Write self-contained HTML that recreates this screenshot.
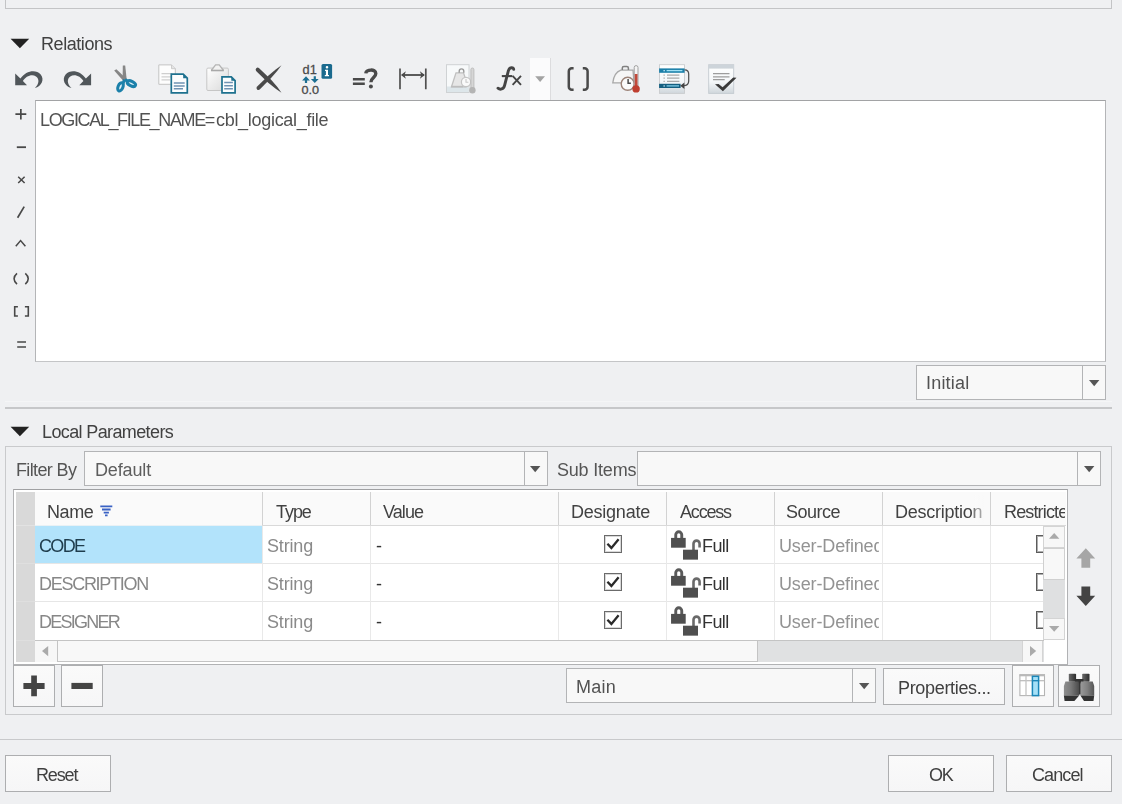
<!DOCTYPE html>
<html>
<head>
<meta charset="utf-8">
<title>Relations</title>
<style>
html,body{margin:0;padding:0;}
body{width:1122px;height:804px;position:relative;overflow:hidden;background:#eff0f2;
 font-family:"Liberation Sans",sans-serif;font-size:18px;color:#3a3a3a;}
.a{position:absolute;box-sizing:border-box;}
.t{position:absolute;white-space:pre;line-height:20px;height:20px;will-change:transform;}
.box{position:absolute;box-sizing:border-box;border:1px solid #b3b4b6;background:#f8f8f8;}
.btn{position:absolute;box-sizing:border-box;border:1px solid #adaeb0;background:linear-gradient(#fafafa,#f6f6f7);}
.vl{position:absolute;width:1px;background:#dcdcdc;}
.hl{position:absolute;height:1px;background:#e6e6e6;}
svg{position:absolute;overflow:visible;}
</style>
</head>
<body>

<!-- top cut-off panel -->
<div class="a" style="left:5px;top:-2px;width:1107px;height:11px;border:1px solid #c3c4c6;"></div>

<!-- Relations header -->
<svg style="left:0;top:0" width="60" height="60"><path d="M10.6 38.8H29.2L19.9 48.3Z" fill="#222"/></svg>
<span class="t" id="tRel" style="left:41.1px;top:34px;color:#414141;letter-spacing:-0.44px">Relations</span>

<!-- TOOLBAR ICONS -->
<!-- all toolbar icons drawn in page coordinates inside one svg -->
<svg style="left:0;top:55px" width="760" height="50" viewBox="0 55 760 50">
<defs>
 <linearGradient id="gclip" x1="0" y1="0" x2="1" y2="1"><stop offset="0" stop-color="#ffffff"/><stop offset="1" stop-color="#d9d9d9"/></linearGradient>
 <linearGradient id="gpage" x1="0" y1="0" x2="0" y2="1"><stop offset="0" stop-color="#ffffff"/><stop offset="0.6" stop-color="#f4f7f9"/><stop offset="1" stop-color="#cfd6db"/></linearGradient>
</defs>
<!-- undo -->
<path d="M15.2 73.400V85.200H27L22.900 81.100C25.600 76.200 31.800 73.600 36 76.400C39.600 79 39.200 83.900 34.800 87.900C41.600 86.300 44.800 79.500 40.700 74.400C35.800 68.900 25.800 70.500 20.400 78.600Z" fill="#50565a"/>
<path d="M91.100 73.400V85.200H79.300L83.400 81.100C80.700 76.200 74.500 73.600 70.300 76.400C66.700 79 67.100 83.900 71.500 87.900C64.700 86.300 61.500 79.500 65.600 74.400C70.500 68.900 80.500 70.500 85.900 78.600Z" fill="#50565a"/>
<!-- scissors -->
<path d="M114.200 70.500L116.400 69.200L127.200 79.400L124.300 82Z" fill="#868686"/>
<path d="M122.800 65.600H125.200L126.800 80.500L122.600 80.500Z" fill="#868686"/>
<path d="M124.600 79.500L122.800 84M125 79.500L128.500 82" stroke="#1b80aa" stroke-width="3"/>
<ellipse cx="120.500" cy="86.800" rx="2.400" ry="4.400" transform="rotate(24 120.500 86.800)" fill="#dff0f7" stroke="#1b80aa" stroke-width="3"/>
<ellipse cx="131.400" cy="83.600" rx="4.500" ry="2.300" transform="rotate(27 131.400 83.600)" fill="#dff0f7" stroke="#1b80aa" stroke-width="3"/>
<!-- copy -->
<path d="M158.800 64.900H171.500L175.300 68.700V84.300H158.800Z" fill="#fdfdfd" stroke="#c4c4c4" stroke-width="1"/>
<path d="M171.500 64.900V68.700H175.300" fill="#e4e4e4" stroke="#c4c4c4" stroke-width="0.800"/>
<path d="M161.500 73.600H172M161.500 76.800H172M161.500 79.800H170" stroke="#cfcfcf" stroke-width="1.300"/>
<path d="M171.300 74.100H183.200L187.300 78.200V92.900H171.300Z" fill="#fbfdfe" stroke="#1e718f" stroke-width="1.700"/>
<path d="M183.200 74.100V78.200H187.300Z" fill="#1e718f"/>
<path d="M173.800 83H184.700M173.800 85.900H184.700M173.800 88.800H183" stroke="#6f93b3" stroke-width="1.500"/>
<!-- paste -->
<rect x="206.800" y="68.100" width="21.600" height="22.400" rx="1.200" fill="url(#gclip)" stroke="#c6c6c6" stroke-width="1"/>
<path d="M211.200 70.500L215.600 64.800H219.200L223.600 70.500" fill="#f2f2f2" stroke="#b4b4b4" stroke-width="1.300"/>
<path d="M211 70.500H223.800" stroke="#a8a8a8" stroke-width="1.600"/>
<path d="M222 76.900H231.300L235.100 80.700V92.900H222Z" fill="#fbfdfe" stroke="#1e718f" stroke-width="1.700"/>
<path d="M231.300 76.900V80.700H235.100Z" fill="#1e718f"/>
<path d="M224.200 82.600H232.900M224.200 85.700H232.900M224.200 88.700H232.900" stroke="#6f93b3" stroke-width="1.500"/>
<!-- X -->
<path d="M258.900 68.100L270.900 79.500L277.400 87.100L281.500 92.800L275.700 88.800L267.900 82.600L256.100 70.900A2 2 0 0 1 258.900 68.100Z" fill="#4a4a4a"/>
<path d="M256.900 86.800L268.500 75.500L276 69.200L281.500 65.200L277.400 70.700L271.100 78.100L259.700 89.600A2 2 0 0 1 256.900 86.800Z" fill="#4a4a4a"/>
<!-- d1 / 0.0 -->
<text x="302.600" y="73.700" font-family="Liberation Sans, sans-serif" font-size="13.500" fill="#4a4a4a" stroke="#4a4a4a" stroke-width="0.3" textLength="14.200" lengthAdjust="spacingAndGlyphs">d1</text>
<path d="M306 76.300L309.900 80.400H307.100V83H304.900V80.400H302.100Z" fill="#1d6f92"/>
<path d="M314.800 83L318.700 78.900H315.900V76.300H313.700V78.900H310.900Z" fill="#1d6f92"/>
<text x="301.500" y="93.700" font-family="Liberation Sans, sans-serif" font-size="11.800" fill="#4a4a4a" stroke="#4a4a4a" stroke-width="0.3" textLength="17.600" lengthAdjust="spacingAndGlyphs">0.0</text>
<rect x="321.500" y="64" width="10.600" height="14.800" rx="1.500" fill="#1a6a8e"/>
<path d="M325.700 67.200A1.300 1.300 0 1 0 328.300 67.200A1.300 1.300 0 1 0 325.700 67.200ZM325 69.800H328V75H329V76.300H324.800V75H325.900V71.100H325Z" fill="#fff"/>
<!-- =? -->
<path d="M352.900 78H364.800V80.600H352.900ZM352.900 82.500H364.800V85H352.900Z" fill="#4a4a4a"/>
<path d="M365.800 73.300C366 69.600 375.600 68.300 375.800 73.600C375.900 77.300 371 77.600 370.900 82.200" fill="none" stroke="#4a4a4a" stroke-width="3.400"/>
<circle cx="370.900" cy="86.400" r="2" fill="#4a4a4a"/>
<!-- |<->| -->
<path d="M400 68.400V89.300M425.800 68.400V89.300" stroke="#505050" stroke-width="1.700"/>
<path d="M402 75H424" stroke="#4a4a4a" stroke-width="1.800"/>
<path d="M400.900 75L405.900 71.300L404.500 75L405.900 78.700Z" fill="#4a4a4a"/>
<path d="M424.900 75L419.900 71.300L421.300 75L419.900 78.700Z" fill="#4a4a4a"/>
<!-- unit-sensitive (disabled) -->
<rect x="446.500" y="64.700" width="22.500" height="27.800" fill="#f7f9fa" stroke="#cfd2d4" stroke-width="1"/>
<rect x="447" y="86.500" width="21.500" height="5.500" fill="#dde6ea"/>
<path d="M451.500 86.800L456 72.800H463.500L466 80V86.800Z" fill="#e6e6e6" stroke="#c0c0c0" stroke-width="1.300"/>
<path d="M459.200 72.800V71.200A2.300 2.300 0 0 1 463.800 71.200V72.800" fill="none" stroke="#9a9a9a" stroke-width="1.400"/>
<path d="M451 86.600H463" stroke="#bdbdbd" stroke-width="1.600"/>
<circle cx="466" cy="82" r="4.600" fill="#fafafa" stroke="#c4c4c4" stroke-width="1.200"/>
<path d="M466 78.900V82.300H468.400" fill="none" stroke="#c9c9c9" stroke-width="1.100"/>
<path d="M470.900 69.500A1.500 1.500 0 0 1 473.900 69.500V88H470.900Z" fill="#d6d6d6" stroke="#b9b9b9" stroke-width="0.900"/>
<circle cx="472.400" cy="90.300" r="3.200" fill="#b4b4b4"/>
<!-- fx -->
<path d="M513.700 69.400C513.400 67.300 509.600 66.600 508.400 70.600L504.600 85.400C503.600 89.500 500 89.900 498 88.200" fill="none" stroke="#444" stroke-width="2.900" stroke-linecap="round"/>
<path d="M501.800 76.100H512.300" stroke="#444" stroke-width="2.100"/>
<path d="M512.600 75.900L521 84.900M521 75.900L512.600 84.900" stroke="#444" stroke-width="1.900"/>
<!-- dropdown zone -->
<rect x="530" y="58" width="21" height="42" fill="#fbfbfc"/>
<path d="M550.500 58V100" stroke="#dcdcde" stroke-width="1"/>
<path d="M535.200 76.200H545L540.100 82Z" fill="#a3a3a3"/>
<!-- [ ] -->
<path d="M573.600 68.300H571.800A3 3 0 0 0 568.800 71.300V86.700A3 3 0 0 0 571.800 89.700H573.600" fill="none" stroke="#4a4a4a" stroke-width="2.500"/>
<path d="M582.800 68.300H584.600A3 3 0 0 1 587.600 71.300V86.700A3 3 0 0 1 584.600 89.700H582.800" fill="none" stroke="#4a4a4a" stroke-width="2.500"/>
<!-- weight + clock + thermometer -->
<path d="M612.800 82.800C613.500 76.500 616 72 620.800 70.200H633L634 82.800Z" fill="#f6f6f6" stroke="#a8a8a8" stroke-width="1.300"/>
<path d="M622.300 70V68A1.600 1.600 0 0 1 623.900 66.400H626.800A1.600 1.600 0 0 1 628.400 68V70" fill="none" stroke="#808080" stroke-width="1.500"/>
<circle cx="627.700" cy="83.800" r="6.500" fill="#fbfbfb" stroke="#9c8378" stroke-width="1.400"/>
<path d="M628.100 79V83.300H630.900" fill="none" stroke="#4a4a4a" stroke-width="1.500"/>
<path d="M634.200 67.500A1.900 1.900 0 0 1 638 67.500V86H634.200Z" fill="#f4f4f4" stroke="#a0a0a0" stroke-width="1"/>
<path d="M634.700 74H637.500V86H634.700Z" fill="#c24a3b"/>
<circle cx="636.100" cy="88.900" r="3.700" fill="#bf3f30"/>
<!-- list -->
<rect x="659.500" y="64.700" width="25" height="28.700" fill="url(#gpage)" stroke="#c9ccce" stroke-width="0.900"/>
<rect x="659.100" y="68.400" width="25.500" height="4.400" fill="#1b7fa8"/>
<path d="M666.600 70.600H682.400" stroke="#9fe0f4" stroke-width="1.300"/>
<rect x="663.500" y="70" width="1.300" height="1.300" fill="#cfeefa"/>
<path d="M667 75.200H679.400M667 78.200H679.400M667 81.300H679.400" stroke="#a9a9a9" stroke-width="1.300"/>
<path d="M663.500 75.200H664.800M663.500 78.200H664.800M663.500 81.300H664.800" stroke="#a9a9a9" stroke-width="1.300"/>
<rect x="659.100" y="83.800" width="21.500" height="4.200" fill="#155f80"/>
<path d="M666.600 85.900H679" stroke="#7fcbe6" stroke-width="1.300"/>
<rect x="663.500" y="85.300" width="1.300" height="1.300" fill="#cfeefa"/>
<path d="M684.600 69.800C687.600 69.800 688.700 71.600 688.700 74V81C688.700 84.300 686.800 85.700 683.500 85.700" fill="none" stroke="#505050" stroke-width="1.250"/>
<path d="M680.200 85.700L684.400 82.400V89Z" fill="#444"/>
<!-- check doc -->
<rect x="708.700" y="64.700" width="25" height="28.700" fill="url(#gpage)" stroke="#c3cad0" stroke-width="0.900"/>
<rect x="708.700" y="64.700" width="25" height="3.900" fill="#cdd4da"/>
<path d="M713 73.600H729.500M713 76.800H729.500M713 79.700H724.700" stroke="#9d9d9d" stroke-width="1.300"/>
<path d="M715 84.300L718.600 84.100L722.600 87.200L733.200 77.400L736.500 77.700L722.900 91.200Z" fill="#3a3a3a"/>
</svg>


<!-- operator column -->
<svg style="left:10px;top:105px" width="22" height="250" viewBox="10 105 22 250" fill="none" stroke="#484848" stroke-width="1.600">
<path d="M15.400 114.200H26.300M20.850 108.900V119.600" stroke-width="1.700"/>
<path d="M16.800 147.200H26" stroke-width="1.800"/>
<path d="M18.200 176.800L24.600 183M24.600 176.800L18.200 183" stroke-width="1.500"/>
<path d="M24.200 206.600L17.600 217.700" stroke-width="1.700"/>
<path d="M15.800 246.200L20.600 240.600L25.400 246.200" stroke-width="1.500"/>
<path d="M17 273.300C13.100 276.600 13.100 280.800 17 284.100M25.300 273.300C29.200 276.600 29.200 280.800 25.300 284.100" stroke-width="1.600"/>
<path d="M17.900 306.700H14.700V316H17.900M24.900 306.700H28.300V316H24.900" stroke-width="1.600"/>
<path d="M17.200 342H26M17.200 347H26" stroke-width="1.700"/>
</svg>


<!-- relations text area -->
<div class="a" style="left:35px;top:100px;width:1071px;height:262px;background:#fff;border:1px solid #b4b5b7;border-top-color:#a2a3a5;border-bottom-color:#c4c5c7;"></div>
<span class="t" id="tLog" style="left:40px;top:110px;color:#525252;letter-spacing:-1.37px">LOGICAL_FILE_NAME=</span>
<span class="t" id="tLog2" style="left:216px;top:110px;color:#525252;letter-spacing:-0.3px">cbl_logical_file</span>

<!-- Initial dropdown -->
<div class="box" style="left:916px;top:365px;width:190px;height:35px;"></div>
<div class="a" style="left:1082px;top:366px;width:1px;height:33px;background:#b3b4b6;"></div>
<svg style="left:1089px;top:380px" width="11" height="7"><path d="M0 0H10.4L5.2 6.2Z" fill="#555"/></svg>
<span class="t" id="tIni" style="left:926.1px;top:373px;color:#525252;letter-spacing:0.19px">Initial</span>

<!-- separator -->
<div class="a" style="left:5px;top:401px;width:1107px;height:1px;background:#f4f5f6;"></div>
<div class="a" style="left:5px;top:407px;width:1107px;height:2px;background:#c6c7c9;"></div>

<!-- Local Parameters header -->
<svg style="left:0;top:400px" width="60" height="60"><path d="M10.6 26.8H29.2L19.9 36.3Z" fill="#222"/></svg>
<span class="t" id="tLoc" style="left:42.0px;top:422px;color:#414141;letter-spacing:-0.62px">Local Parameters</span>

<!-- Local parameters panel -->
<div class="a" style="left:5px;top:446px;width:1107px;height:269px;border:1px solid #c9cacc;"></div>

<!-- filter row -->
<span class="t" id="tFil" style="left:16.2px;top:460px;color:#555555;letter-spacing:-0.64px">Filter By</span>
<div class="box" style="left:84px;top:451px;width:464px;height:35px;"></div>
<div class="a" style="left:524px;top:452px;width:1px;height:33px;background:#b3b4b6;"></div>
<svg style="left:530px;top:466px" width="11" height="7"><path d="M0 0H10.4L5.2 6.2Z" fill="#555"/></svg>
<span class="t" id="tDef" style="left:95.0px;top:460px;color:#5e5e5e;letter-spacing:-0.14px">Default</span>
<div class="box" style="left:637px;top:451px;width:464px;height:35px;"></div>
<div class="a" style="left:1077px;top:452px;width:1px;height:33px;background:#b3b4b6;"></div>
<svg style="left:1084px;top:466px" width="11" height="7"><path d="M0 0H10.4L5.2 6.2Z" fill="#555"/></svg>

<span class="t" id="tSub" style="left:556.5px;top:460px;color:#555555;letter-spacing:-0.2px">Sub Items</span>
<!-- TABLE -->
<div class="a" style="left:13px;top:489px;width:1055px;height:176px;background:#fff;border:1px solid #b1b2b4;border-top-color:#a0a1a3;"></div>
<!-- gray row-header column -->
<div class="a" style="left:16px;top:492px;width:19px;height:170px;background:#d9d9d9;"></div>
<div class="a" style="left:16px;top:525px;width:19px;height:1px;background:#e2e2e2;"></div>
<div class="a" style="left:16px;top:563px;width:19px;height:1px;background:#dfdfdf;"></div>
<div class="a" style="left:16px;top:601px;width:19px;height:1px;background:#dfdfdf;"></div>
<div class="a" style="left:16px;top:640px;width:19px;height:1px;background:#dfdfdf;"></div>
<!-- header -->
<div class="a" style="left:35px;top:492px;width:1031px;height:33px;background:#fafafa;"></div>
<div class="a" style="left:35px;top:525px;width:1031px;height:1px;background:#d9d9d9;"></div>
<div class="a" style="left:35px;top:525px;width:227px;height:1px;background:#e9f1f5;"></div>
<!-- selected cell -->
<div class="a" style="left:35px;top:526px;width:227px;height:37px;background:#b2e3fb;"></div>
<!-- row lines -->
<div class="hl" style="left:35px;top:563px;width:1008px;"></div>
<div class="hl" style="left:35px;top:601px;width:1008px;"></div>
<!-- column lines header -->
<div class="vl" style="left:262px;top:492px;height:33px;background:#d2d2d2;"></div>
<div class="vl" style="left:370px;top:492px;height:33px;background:#d2d2d2;"></div>
<div class="vl" style="left:558px;top:492px;height:33px;background:#d2d2d2;"></div>
<div class="vl" style="left:666px;top:492px;height:33px;background:#d2d2d2;"></div>
<div class="vl" style="left:774px;top:492px;height:33px;background:#d2d2d2;"></div>
<div class="vl" style="left:882px;top:492px;height:33px;background:#d2d2d2;"></div>
<div class="vl" style="left:990px;top:492px;height:33px;background:#d2d2d2;"></div>
<!-- column lines body -->
<div class="vl" style="left:262px;top:526px;height:114px;background:#e9e9e9;"></div>
<div class="vl" style="left:370px;top:526px;height:114px;background:#e9e9e9;"></div>
<div class="vl" style="left:558px;top:526px;height:114px;background:#e9e9e9;"></div>
<div class="vl" style="left:666px;top:526px;height:114px;background:#e9e9e9;"></div>
<div class="vl" style="left:774px;top:526px;height:114px;background:#e9e9e9;"></div>
<div class="vl" style="left:882px;top:526px;height:114px;background:#e9e9e9;"></div>
<div class="vl" style="left:990px;top:526px;height:114px;background:#e9e9e9;"></div>
<!-- header labels -->
<span class="t" id="hName" style="left:47.0px;top:502px;color:#424242;letter-spacing:-0.39px">Name</span>
<svg style="left:100px;top:505px" width="13" height="12"><path d="M0.3 0.4H12.3V2.2H0.3ZM2 3.6H10.6V5.4H2ZM3.7 6.8H8.9V8.6H3.7ZM5 9.6H7.6V11.2H5Z" fill="#3a62c4"/></svg>
<span class="t" id="hType" style="left:275.9px;top:502px;color:#424242;letter-spacing:-1.06px">Type</span>
<span class="t" id="hVal" style="left:383.4px;top:502px;color:#424242;letter-spacing:-0.93px">Value</span>
<span class="t" id="hDes" style="left:571.0px;top:502px;color:#424242;letter-spacing:-0.23px">Designate</span>
<span class="t" id="hAcc" style="left:679.9px;top:502px;color:#424242;letter-spacing:-1.19px">Access</span>
<span class="t" id="hSrc" style="left:786.1px;top:502px;color:#424242;letter-spacing:-0.51px">Source</span>
<div class="a" style="left:895px;top:495px;width:89px;height:28px;overflow:hidden;"><span class="t" id="hDsc" style="left:0;top:7px;color:#424242;letter-spacing:-0.25px">Description</span><div class="a" style="left:79px;top:0;width:10px;height:28px;background:linear-gradient(90deg,rgba(250,250,250,0.3),rgba(250,250,250,0.65));"></div></div>
<div class="a" style="left:1003px;top:495px;width:62px;height:28px;overflow:hidden;"><span class="t" id="hRes" style="left:0.5px;top:7px;color:#424242;letter-spacing:-0.85px">Restricted</span></div>
<!-- rows -->
<span class="t" id="r1n" style="left:38.5px;top:536px;color:#1e3c4c;letter-spacing:-1.68px">CODE</span>
<span class="t" id="r2n" style="left:39.0px;top:574px;color:#878787;letter-spacing:-1.28px">DESCRIPTION</span>
<span class="t" id="r3n" style="left:39.0px;top:612px;color:#878787;letter-spacing:-1.74px">DESIGNER</span>
<span class="t" id="r1t" style="left:266.6px;top:536px;color:#8a8a8a;letter-spacing:-0.17px">String</span>
<span class="t" style="left:376px;top:536px;color:#333;">-</span>
<div class="a" style="left:604px;top:535px;width:18px;height:18px;background:#fff;border:1px solid #6b6b6b;box-shadow:inset 0 0 0 1px #d8d8d8;"></div>
<svg style="left:604px;top:535px" width="18" height="18"><path d="M3.4 8.700L7.400 12.900L14.600 4.300" fill="none" stroke="#2a2a2a" stroke-width="2.300"/></svg>
<svg style="left:670px;top:530px" width="34" height="32"><path d="M5.750 8.500V4.800A3 3 0 0 1 11.750 4.800V8.500" fill="none" stroke="#5a5a5a" stroke-width="2.900"/><rect x="1.050" y="7.900" width="14.650" height="9.800" fill="#4f4f4f"/><path d="M23.500 20V13.700A3.050 3.050 0 0 1 29.600 13.700V17.500" fill="none" stroke="#6a6a6a" stroke-width="2.600"/><rect x="13" y="19.700" width="15" height="9.950" fill="#4f4f4f"/></svg>
<span class="t" id="r1f" style="left:701.7px;top:536px;color:#323232;letter-spacing:-0.6px">Full</span>
<div class="a" style="left:779px;top:532px;width:100px;height:28px;overflow:hidden;"><span class="t" id="r1u" style="left:0;top:4px;color:#939393;letter-spacing:-0.14px">User-Defined</span></div>
<div class="a" style="left:1036px;top:535px;width:18px;height:18px;background:#fff;border:1px solid #5c5c5c;box-shadow:inset 0 0 0 1px rgba(92,92,92,0.5);"></div>
<span class="t" id="r2t" style="left:266.6px;top:574px;color:#8a8a8a;letter-spacing:-0.17px">String</span>
<span class="t" style="left:376px;top:574px;color:#333;">-</span>
<div class="a" style="left:604px;top:573px;width:18px;height:18px;background:#fff;border:1px solid #6b6b6b;box-shadow:inset 0 0 0 1px #d8d8d8;"></div>
<svg style="left:604px;top:573px" width="18" height="18"><path d="M3.4 8.700L7.400 12.900L14.600 4.300" fill="none" stroke="#2a2a2a" stroke-width="2.300"/></svg>
<svg style="left:670px;top:568px" width="34" height="32"><path d="M5.750 8.500V4.800A3 3 0 0 1 11.750 4.800V8.500" fill="none" stroke="#5a5a5a" stroke-width="2.900"/><rect x="1.050" y="7.900" width="14.650" height="9.800" fill="#4f4f4f"/><path d="M23.500 20V13.700A3.050 3.050 0 0 1 29.600 13.700V17.500" fill="none" stroke="#6a6a6a" stroke-width="2.600"/><rect x="13" y="19.700" width="15" height="9.950" fill="#4f4f4f"/></svg>
<span class="t" id="r2f" style="left:701.7px;top:574px;color:#323232;letter-spacing:-0.6px">Full</span>
<div class="a" style="left:779px;top:570px;width:100px;height:28px;overflow:hidden;"><span class="t" id="r2u" style="left:0;top:4px;color:#939393;letter-spacing:-0.14px">User-Defined</span></div>
<div class="a" style="left:1036px;top:573px;width:18px;height:18px;background:#fff;border:1px solid #5c5c5c;box-shadow:inset 0 0 0 1px rgba(92,92,92,0.5);"></div>
<span class="t" id="r3t" style="left:266.6px;top:612px;color:#8a8a8a;letter-spacing:-0.17px">String</span>
<span class="t" style="left:376px;top:612px;color:#333;">-</span>
<div class="a" style="left:604px;top:611px;width:18px;height:18px;background:#fff;border:1px solid #6b6b6b;box-shadow:inset 0 0 0 1px #d8d8d8;"></div>
<svg style="left:604px;top:611px" width="18" height="18"><path d="M3.4 8.700L7.400 12.900L14.600 4.300" fill="none" stroke="#2a2a2a" stroke-width="2.300"/></svg>
<svg style="left:670px;top:606px" width="34" height="32"><path d="M5.750 8.500V4.800A3 3 0 0 1 11.750 4.800V8.500" fill="none" stroke="#5a5a5a" stroke-width="2.900"/><rect x="1.050" y="7.900" width="14.650" height="9.800" fill="#4f4f4f"/><path d="M23.500 20V13.700A3.050 3.050 0 0 1 29.600 13.700V17.500" fill="none" stroke="#6a6a6a" stroke-width="2.600"/><rect x="13" y="19.700" width="15" height="9.950" fill="#4f4f4f"/></svg>
<span class="t" id="r3f" style="left:701.7px;top:612px;color:#323232;letter-spacing:-0.6px">Full</span>
<div class="a" style="left:779px;top:608px;width:100px;height:28px;overflow:hidden;"><span class="t" id="r3u" style="left:0;top:4px;color:#939393;letter-spacing:-0.14px">User-Defined</span></div>
<div class="a" style="left:1036px;top:611px;width:18px;height:18px;background:#fff;border:1px solid #5c5c5c;box-shadow:inset 0 0 0 1px rgba(92,92,92,0.5);"></div>

<!-- vertical scrollbar -->
<div class="a" style="left:1043px;top:526px;width:22px;height:114px;background:#dfe0e1;"></div>
<div class="a" style="left:1043px;top:526px;width:22px;height:22px;background:#f7f7f7;border:1px solid #d4d4d4;"></div>
<svg style="left:1049px;top:533px" width="11" height="6"><path d="M0 5.8H10.4L5.2 0Z" fill="#aaa"/></svg>
<div class="a" style="left:1043px;top:548px;width:22px;height:32px;background:#f8f8f8;border:1px solid #d0d0d0;"></div>
<div class="a" style="left:1043px;top:618px;width:22px;height:22px;background:#f7f7f7;border:1px solid #d4d4d4;"></div>
<svg style="left:1049px;top:626px" width="11" height="6"><path d="M0 0H10.4L5.2 5.8Z" fill="#aaa"/></svg>
<!-- horizontal scrollbar -->
<div class="a" style="left:35px;top:640px;width:1009px;height:22px;background:#e0e1e2;"></div>
<div class="a" style="left:35px;top:640px;width:1009px;height:1px;background:#c4c4c4;"></div>
<div class="a" style="left:35px;top:641px;width:22px;height:21px;background:#f7f7f7;"></div>
<svg style="left:42px;top:646px" width="7" height="11"><path d="M6.2 0V10.2L0 5.1Z" fill="#aaa"/></svg>
<div class="a" style="left:57px;top:640px;width:701px;height:22px;background:#f8f8f8;border:1px solid #c4c4c4;"></div>
<div class="a" style="left:1022px;top:641px;width:21px;height:21px;background:#f7f7f7;border-left:1px solid #d4d4d4;border-right:1px solid #d4d4d4;"></div>
<svg style="left:1030px;top:646px" width="7" height="11"><path d="M0 0V10.2L6.2 5.1Z" fill="#aaa"/></svg>
<div class="a" style="left:1044px;top:640px;width:22px;height:22px;background:#fff;"></div>
<!-- reorder arrows -->
<svg style="left:1076px;top:548px" width="20" height="20"><path d="M9.8 0.3L19.2 10.4H14.2V19.8H5.4V10.4H0.4Z" fill="#a6a6a6"/></svg>
<svg style="left:1076px;top:586px" width="20" height="20"><path d="M9.8 19.9L19.2 9.8H14.2V0.4H5.4V9.8H0.4Z" fill="#444"/></svg>


<!-- bottom row of panel -->
<div class="btn" style="left:13px;top:665px;width:42px;height:42px;"></div>
<svg style="left:13px;top:665px" width="42" height="42"><path d="M18.2 10.4H23.9V17.9H31.6V24H23.9V31.3H18.2V24H10.4V17.9H18.2Z" fill="#444"/></svg>
<div class="btn" style="left:61px;top:665px;width:42px;height:42px;"></div>
<svg style="left:61px;top:665px" width="42" height="42"><path d="M10.4 17.9H31.7V24H10.4Z" fill="#444"/></svg>
<div class="box" style="left:566px;top:668px;width:310px;height:35px;"></div>
<div class="a" style="left:852px;top:669px;width:1px;height:33px;background:#b3b4b6;"></div>
<svg style="left:859px;top:683px" width="11" height="7"><path d="M0 0H10.4L5.2 6.2Z" fill="#555"/></svg>
<span class="t" id="tMain" style="left:576.4px;top:677px;color:#525252;letter-spacing:0.26px">Main</span>
<div class="btn" style="left:883px;top:668px;width:122px;height:37px;"></div>
<span class="t" id="tProp" style="left:897.9px;top:678px;color:#404040;letter-spacing:-0.33px">Properties...</span>
<div class="btn" style="left:1012px;top:665px;width:42px;height:42px;"></div>
<div class="btn" style="left:1058px;top:665px;width:42px;height:42px;"></div>
<svg style="left:1012px;top:665px" width="90" height="42" viewBox="1012 665 90 42">
<defs>
<linearGradient id="gbl" x1="0" y1="0" x2="1" y2="0"><stop offset="0" stop-color="#8e8e8e"/><stop offset="0.45" stop-color="#7a7a7a"/><stop offset="1" stop-color="#4a4a4a"/></linearGradient>
<linearGradient id="gbr" x1="0" y1="0" x2="1" y2="0"><stop offset="0" stop-color="#9a9a9a"/><stop offset="0.5" stop-color="#808080"/><stop offset="1" stop-color="#565656"/></linearGradient>
<linearGradient id="gey" x1="0" y1="0" x2="1" y2="0"><stop offset="0" stop-color="#6a6a6a"/><stop offset="1" stop-color="#2c2c2c"/></linearGradient>
</defs>
<!-- columns icon -->
<rect x="1019.900" y="675" width="24.600" height="20.600" fill="#fff" stroke="#b4b4b4" stroke-width="1.100"/>
<rect x="1019.400" y="674.100" width="25.600" height="2.200" fill="#b9b9b9"/>
<path d="M1020 680.700H1044.500" stroke="#b9b9b9" stroke-width="1.200"/>
<path d="M1026 676V695.500" stroke="#c4c4c4" stroke-width="1.300"/>
<rect x="1032.400" y="676.300" width="6.200" height="19.300" fill="#a5e0f7" stroke="#1b86b8" stroke-width="1.500"/>
<path d="M1032 680.700H1039" stroke="#1b86b8" stroke-width="1.400"/>
<!-- binoculars -->
<rect x="1068.800" y="673.800" width="7.300" height="8" rx="0.800" fill="url(#gey)"/>
<rect x="1082.200" y="673.800" width="7.300" height="8" rx="0.800" fill="url(#gey)"/>
<rect x="1075" y="679" width="8.500" height="15.500" fill="#333"/>
<path d="M1065.400 681.600H1078.600L1079.200 684V695.500H1063.900V686Z" fill="url(#gbl)"/>
<path d="M1081 681.600H1092.700L1094.200 686V695.500H1080.400V684Z" fill="url(#gbr)"/>
<path d="M1063.900 695.500H1079.200L1074.400 700.900H1064.600Z" fill="#333"/>
<path d="M1080.400 695.500H1094.200L1093.500 700.900H1084Z" fill="#333"/>
</svg>



<!-- footer separator -->
<div class="a" style="left:0;top:739px;width:1122px;height:1px;background:#c8c9cb;"></div>

<!-- footer buttons -->
<div class="btn" style="left:5px;top:755px;width:106px;height:37px;"></div>
<span class="t" id="tRes" style="left:36.1px;top:765px;color:#404040;letter-spacing:-1.16px">Reset</span>
<div class="btn" style="left:888px;top:755px;width:106px;height:37px;"></div>
<span class="t" id="tOk" style="left:928.6px;top:765px;color:#404040;letter-spacing:-1.22px">OK</span>
<div class="btn" style="left:1006px;top:755px;width:106px;height:37px;"></div>
<span class="t" id="tCan" style="left:1032.4px;top:765px;color:#404040;letter-spacing:-0.89px">Cancel</span>

</body>
</html>
